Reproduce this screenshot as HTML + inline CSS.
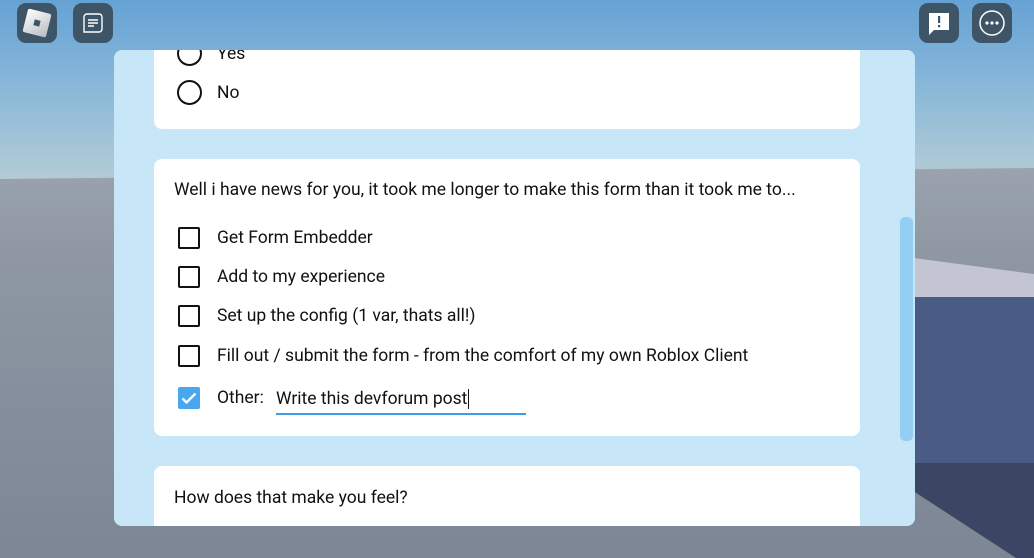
<!DOCTYPE html>
<html><head><style>
*{margin:0;padding:0;box-sizing:border-box}
body{width:1034px;height:558px;overflow:hidden;position:relative;font-family:"Roboto","Liberation Sans",sans-serif;color:#111;
background:linear-gradient(180deg,#66a2d4 0px,#86b6d9 80px,#a6c6d6 150px,#b4cbd4 180px);}
.abs{position:absolute}
.btn{position:absolute;top:3px;width:40px;height:40px;border-radius:9px;background:#3d5566}
.panel{left:114px;top:50px;width:801px;height:476px;background:#c7e6f8;border-radius:8px;overflow:hidden}
.card{position:absolute;left:40px;width:706px;background:#fff;border-radius:8px}
.t{position:absolute;font-size:17.5px;white-space:nowrap}
.cb{position:absolute;left:24px;width:22px;height:22px;border:2.5px solid #111;border-radius:2px}
.rad{position:absolute;left:23px;width:25px;height:25px;border:2.5px solid #111;border-radius:50%}
</style></head><body>
<div class="abs" style="left:0;top:166px;width:1034px;height:392px;background:linear-gradient(180deg,#9aa3ae 0px,#8e97a3 90px,#858e9c 250px,#7d8695 392px);clip-path:polygon(0 13px,100% 2px,100% 100%,0 100%)"></div>
<div class="abs" style="left:914px;top:258px;width:120px;height:40px;background:#c3c6d2;clip-path:polygon(0 0,100% 40%,100% 100%,0 100%)"></div>
<div class="abs" style="left:914px;top:297px;width:120px;height:166px;background:#4a5b85"></div>
<div class="abs" style="left:914px;top:463px;width:120px;height:95px;background:#3a4663;clip-path:polygon(0 0,100% 0,100% 100%,85% 100%,0 30%)"></div>

<div class="btn" style="left:17px">
<div class="abs" style="left:8px;top:8px;width:24px;height:24px;background:linear-gradient(135deg,#fff,#b8bcc0);transform:rotate(14deg);border-radius:2px"><div class="abs" style="left:9px;top:9px;width:6px;height:6px;background:#3d5566"></div></div></div>
<div class="btn" style="left:73px">
<svg class="abs" style="left:8px;top:8px" width="24" height="24" viewBox="0 0 24 24" fill="none" stroke="#fff" stroke-width="1.4"><path d="M6 3h12a3 3 0 0 1 3 3v12a3 3 0 0 1-3 3H3V6a3 3 0 0 1 3-3z"/><path d="M7 9h10M7 12h10M7 15h6"/></svg></div>
<div class="btn" style="left:919px">
<svg class="abs" style="left:7px;top:8px" width="26" height="26" viewBox="0 0 26 26"><path d="M3 2h20v17H8l-5 5z" fill="#fff"/><rect x="12" y="5" width="2.2" height="7" fill="#3d5566"/><rect x="12" y="14" width="2.2" height="2.2" fill="#3d5566"/></svg></div>
<div class="btn" style="left:972px">
<svg class="abs" style="left:6px;top:6px" width="28" height="28" viewBox="0 0 28 28"><circle cx="14" cy="14" r="12" fill="none" stroke="#fff" stroke-width="1.5"/><circle cx="9" cy="14" r="1.6" fill="#fff"/><circle cx="14" cy="14" r="1.6" fill="#fff"/><circle cx="19" cy="14" r="1.6" fill="#fff"/></svg></div>

<div class="abs panel">
 <div class="card" style="top:-20px;height:99px">
  <div class="rad" style="top:11px"></div><div class="t" style="left:63px;top:14px">Yes</div>
  <div class="rad" style="top:50px"></div><div class="t" style="left:63px;top:53px">No</div>
 </div>
 <div class="card" style="top:109px;height:277px">
  <div class="t" style="left:20px;top:21px">Well i have news for you, it took me longer to make this form than it took me to...</div>
  <div class="cb" style="top:68px"></div><div class="t" style="left:63px;top:69px">Get Form Embedder</div>
  <div class="cb" style="top:107px"></div><div class="t" style="left:63px;top:108px">Add to my experience</div>
  <div class="cb" style="top:146px"></div><div class="t" style="left:63px;top:147px">Set up the config (1 var, thats all!)</div>
  <div class="cb" style="top:186px"></div><div class="t" style="left:63px;top:187px">Fill out / submit the form - from the comfort of my own Roblox Client</div>
  <div class="abs" style="left:24px;top:228px;width:22px;height:22px;background:#4aa7ee;border-radius:2px">
   <svg width="22" height="22" viewBox="0 0 22 22"><path d="M4.5 11.5l4 4 9-9" fill="none" stroke="#fff" stroke-width="2.3"/></svg></div>
  <div class="t" style="left:63px;top:229px">Other:</div>
  <div class="t" style="left:122px;top:230px">Write this devforum post<span style="border-left:1.5px solid #111;margin-left:1px"></span></div>
  <div class="abs" style="left:122px;top:254px;width:250px;height:2px;background:#3d9be9"></div>
 </div>
 <div class="card" style="top:416px;height:80px">
  <div class="t" style="left:20px;top:22px">How does that make you feel?</div>
 </div>
 <div class="abs" style="left:786px;top:167px;width:13px;height:224px;background:#94cff3;border-radius:5px"></div>
</div>
</body></html>
